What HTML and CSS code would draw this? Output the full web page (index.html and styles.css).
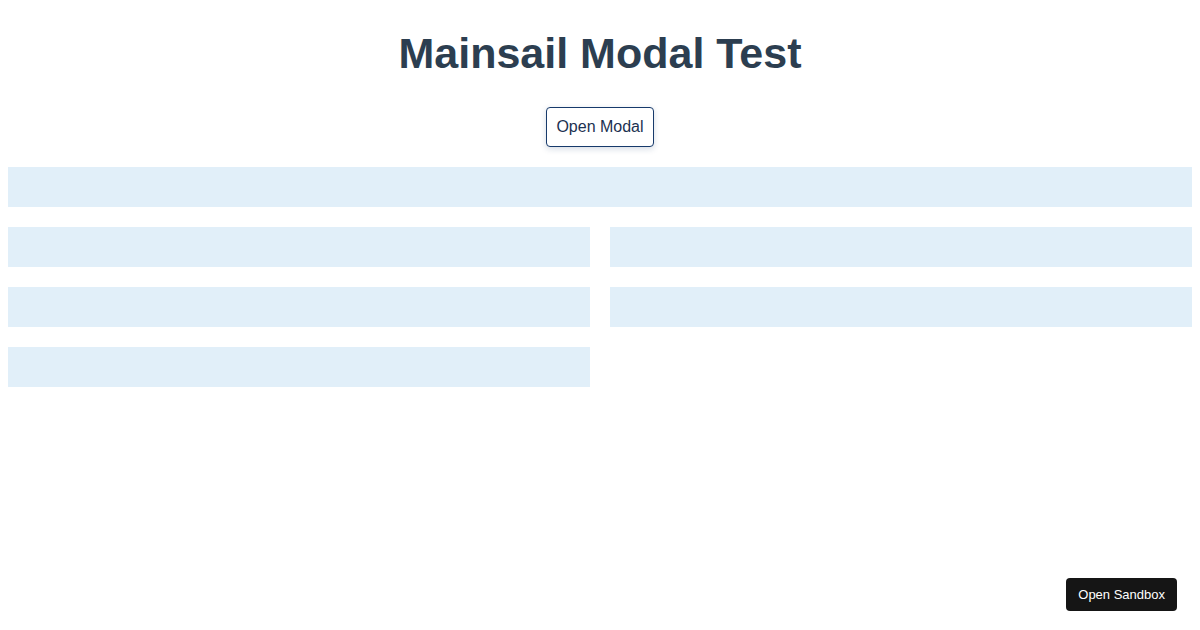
FILE: index.html
```html
<!DOCTYPE html>
<html lang="en">
<head>
<meta charset="utf-8">
<title>Mainsail Modal Test</title>
<link rel="stylesheet" href="styles.css">
</head>
<body>
<main class="page">
  <h1 class="title">Mainsail Modal Test</h1>
  <div class="actions">
    <button class="btn-open" type="button">Open Modal</button>
  </div>
  <div class="bar bar-full"></div>
  <div class="grid">
    <div class="bar"></div>
    <div class="bar"></div>
    <div class="bar"></div>
    <div class="bar"></div>
    <div class="bar"></div>
  </div>
</main>
<button class="sandbox" type="button">Open Sandbox</button>
</body>
</html>
```
FILE: styles.css
```css
html, body {
  margin: 0;
  padding: 0;
  background: #ffffff;
}
body {
  padding: 8px;
  font-family: "Liberation Sans", Arial, sans-serif;
}
.page {
  display: flex;
  flex-direction: column;
}
.title {
  margin: 26px 0 0;
  text-align: center;
  font-size: 43px;
  line-height: 39px;
  font-weight: 700;
  color: #2c3e50;
}
.actions {
  display: flex;
  justify-content: center;
  margin-top: 34px;
}
.btn-open {
  height: 40px;
  padding: 0 9px;
  font-family: "Liberation Sans", Arial, sans-serif;
  font-size: 16px;
  color: #1c3151;
  background: #ffffff;
  border: 1px solid #173a6b;
  border-radius: 4px;
  box-shadow: 0 2px 6px rgba(23, 58, 107, 0.18);
}
.bar {
  height: 40px;
  background: #e1eff9;
}
.bar-full {
  margin-top: 20px;
}
.grid {
  display: grid;
  grid-template-columns: 1fr 1fr;
  gap: 20px;
  margin-top: 20px;
}
.sandbox {
  position: fixed;
  right: 23px;
  bottom: 19px;
  height: 33px;
  padding: 0 12px;
  font-family: "Liberation Sans", Arial, sans-serif;
  font-size: 13px;
  color: #ffffff;
  background: #151515;
  border: none;
  border-radius: 4px;
}
```
